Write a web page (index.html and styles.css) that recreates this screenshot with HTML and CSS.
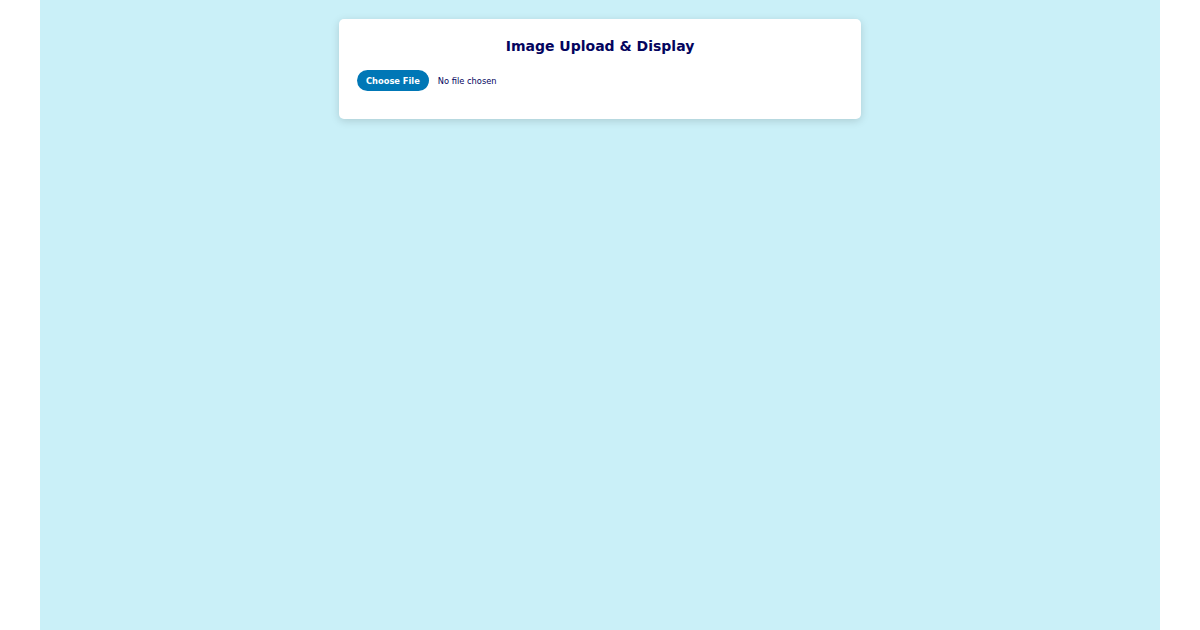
FILE: index.html
```html
<!DOCTYPE html>
<html lang="en">
<head>
<meta charset="utf-8">
<title>Image Upload &amp; Display</title>
<link rel="stylesheet" href="styles.css">
</head>
<body>
  <main class="page">
    <section class="card">
      <h1 class="card-title">Image Upload &amp; Display</h1>
      <input class="file-input" type="file" accept="image/*">
    </section>
  </main>
</body>
</html>
```

FILE: styles.css
```css
html, body {
  margin: 0;
  padding: 0;
  background: #ffffff;
  font-family: "DejaVu Sans", sans-serif;
}

.page {
  margin: 0 40px;
  min-height: 100vh;
  box-sizing: border-box;
  padding-top: 19px;
  background: #caf0f8;
}

.card {
  width: 522px;
  box-sizing: border-box;
  margin: 0 auto;
  padding: 18px 18px 28px;
  background: #ffffff;
  border-radius: 5px;
  box-shadow: 0 2px 8px rgba(0, 0, 0, 0.15);
}

.card-title {
  margin: 0 0 14px;
  font-size: 14px;
  line-height: 19px;
  font-weight: bold;
  text-align: center;
  color: #03045e;
}

.file-input {
  display: block;
  font-family: "DejaVu Sans", sans-serif;
  font-size: 8.3px;
  color: #03045e;
}

.file-input::file-selector-button {
  height: 21px;
  padding: 0 9px;
  margin-right: 9px;
  border: none;
  border-radius: 11px;
  background: #0077b6;
  color: #ffffff;
  font-family: "DejaVu Sans", sans-serif;
  font-size: 8.3px;
  font-weight: bold;
  cursor: pointer;
}
```
